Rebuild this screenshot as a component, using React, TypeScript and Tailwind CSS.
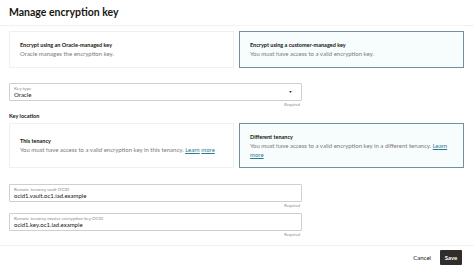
import React from "react";

function Card({ title, desc, selected, link }: { title: string; desc: string; selected?: boolean; link?: boolean }) {
  return (
    <div
      className={
        "px-[10px] flex flex-col justify-center " +
        (selected ? "border border-[#6f929e] bg-[#f7fcfd]" : "border border-[#eef0f1] bg-white")
      }
    >
      <div className="text-[5.5px] leading-[8px] font-bold text-[#161513]">{title}</div>
      <div className="text-[6px] leading-[9px] text-[#7a7a7a]">
        {desc}
        {link && (
          <>
            {" "}
            <span className="text-[#2f7a91] underline">Learn</span>{" "}
            <span className="text-[#2f7a91] underline">more</span>
          </>
        )}
      </div>
    </div>
  );
}

function Field({ label, value, caret }: { label: string; value: string; caret?: boolean }) {
  return (
    <div className="w-[293px]">
      <div className="h-[18px] border border-[#cfcfcf] rounded-[1px] px-[4px] relative flex flex-col justify-center">
        <div className="text-[4.5px] leading-[5px] text-[#8a8a8a]">{label}</div>
        <div className="text-[6px] leading-[7px] text-[#161513]">{value}</div>
        {caret && (
          <svg className="absolute right-[9px] top-[7px]" width="3" height="2" viewBox="0 0 4 3">
            <path d="M0 0 L4 0 L2 3 Z" fill="#333" />
          </svg>
        )}
      </div>
      <div className="text-right text-[4px] leading-[5px] text-[#8a8a8a] mt-[1px] pr-[2px]">Required</div>
    </div>
  );
}

export default function App() {
  return (
    <div className="w-[474px] h-[268px] bg-white relative overflow-hidden" style={{ fontFamily: "Lato, 'Noto Sans', sans-serif" }}>
      <div className="h-[26px] border-b border-[#f1f1f1] pl-[9px] flex items-center">
        <div className="text-[10.5px] font-bold text-[#161513]">Manage encryption key</div>
      </div>
      <div className="pl-[9px] pr-[10px] pt-[5px]">
        <div className="grid grid-cols-2 gap-[5px] h-[37px]">
          <Card title="Encrypt using an Oracle-managed key" desc="Oracle manages the encryption key." />
          <Card title="Encrypt using a customer-managed key" desc="You must have access to a valid encryption key." selected />
        </div>
        <div className="mt-[15px]">
          <Field label="Key type" value="Oracle" caret />
        </div>
        <div className="mt-[5px] text-[5.5px] leading-[8px] font-bold text-[#161513]">Key location</div>
        <div className="grid grid-cols-2 gap-[5px] h-[45px] mt-[3px]">
          <Card title="This tenancy" desc="You must have access to a valid encryption key in this tenancy." link />
          <Card title="Different tenancy" desc="You must have access to a valid encryption key in a different tenancy." link selected />
        </div>
        <div className="mt-[16px]">
          <Field label="Remote tenancy vault OCID" value="ocid1.vault.oc1.iad.example" />
        </div>
        <div className="mt-[5px]">
          <Field label="Remote tenancy master encryption key OCID" value="ocid1.key.oc1.iad.example" />
        </div>
      </div>
      <div className="absolute left-0 right-0 top-[245px] border-t border-[#f1f1f1] h-[23px] flex items-center justify-end pr-[12px] gap-[9px]">
        <div className="text-[6px] text-[#161513]">Cancel</div>
        <div className="w-[22px] h-[15px] bg-[#312d2a] rounded-[1px] flex items-center justify-center text-[6px] font-bold text-white">Save</div>
      </div>
    </div>
  );
}
